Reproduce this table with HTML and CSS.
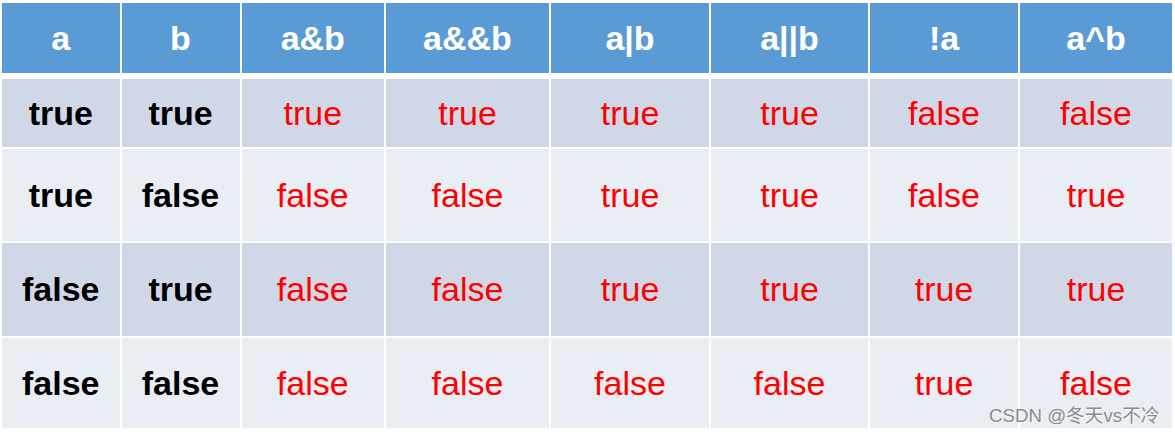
FILE: index.html
```html
<!DOCTYPE html>
<html>
<head>
<meta charset="utf-8">
<link rel="stylesheet" href="styles.css">
</head>
<body>
<div class="page">
  <div class="truth">
    <div class="cell head">a</div>
    <div class="cell head">b</div>
    <div class="cell head">a&amp;b</div>
    <div class="cell head">a&amp;&amp;b</div>
    <div class="cell head">a|b</div>
    <div class="cell head">a||b</div>
    <div class="cell head">!a</div>
    <div class="cell head">a^b</div>

    <div class="cell odd in">true</div>
    <div class="cell odd in">true</div>
    <div class="cell odd out">true</div>
    <div class="cell odd out">true</div>
    <div class="cell odd out">true</div>
    <div class="cell odd out">true</div>
    <div class="cell odd out">false</div>
    <div class="cell odd out">false</div>

    <div class="cell even in">true</div>
    <div class="cell even in">false</div>
    <div class="cell even out">false</div>
    <div class="cell even out">false</div>
    <div class="cell even out">true</div>
    <div class="cell even out">true</div>
    <div class="cell even out">false</div>
    <div class="cell even out">true</div>

    <div class="cell odd in">false</div>
    <div class="cell odd in">true</div>
    <div class="cell odd out">false</div>
    <div class="cell odd out">false</div>
    <div class="cell odd out">true</div>
    <div class="cell odd out">true</div>
    <div class="cell odd out">true</div>
    <div class="cell odd out">true</div>

    <div class="cell even in">false</div>
    <div class="cell even in">false</div>
    <div class="cell even out">false</div>
    <div class="cell even out">false</div>
    <div class="cell even out">false</div>
    <div class="cell even out">false</div>
    <div class="cell even out">true</div>
    <div class="cell even out">false</div>
  </div>
  <div class="watermark">CSDN @冬天vs不冷</div>
</div>
</body>
</html>
```

FILE: styles.css
```css
html, body {
  margin: 0;
  padding: 0;
  background: #ffffff;
}

.page {
  position: relative;
  width: 1175px;
  height: 433px;
  padding: 3px 0 0 2px;
  box-sizing: border-box;
}

.truth {
  display: grid;
  grid-template-columns: 117.5px 118px 142.5px 163px 158px 157px 148px 152px;
  grid-template-rows: 74px 67.5px 92px 93px 90px;
  gap: 2px;
  font-family: "Liberation Sans", Arial, sans-serif;
  font-size: 34px;
}

.cell {
  display: flex;
  align-items: center;
  justify-content: center;
  line-height: 1;
}

.head {
  background: #5b9bd5;
  color: #ffffff;
  font-weight: bold;
  margin-bottom: 4px;
}

.odd {
  background: #d0d8e8;
}

.even {
  background: #e9edf4;
}

.in {
  color: #000000;
  font-weight: bold;
}

.out {
  color: #ff0000;
}

.watermark {
  position: absolute;
  left: 989px;
  top: 400px;
  font-family: "Liberation Sans", Arial, "Noto Sans CJK SC", sans-serif;
  font-size: 18.7px;
  color: #8c8c8c;
  text-shadow: 1px 1px 1px rgba(255, 255, 255, 0.8);
  white-space: nowrap;
}
```
